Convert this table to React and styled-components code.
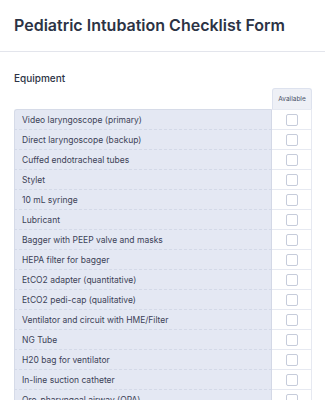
import React from "react";
import styled, { createGlobalStyle } from "styled-components";

const items = [
  "Video laryngoscope (primary)",
  "Direct laryngoscope (backup)",
  "Cuffed endotracheal tubes",
  "Stylet",
  "10 mL syringe",
  "Lubricant",
  "Bagger with PEEP valve and masks",
  "HEPA filter for bagger",
  "EtCO2 adapter (quantitative)",
  "EtCO2 pedi-cap (qualitative)",
  "Ventilator and circuit with HME/Filter",
  "NG Tube",
  "H20 bag for ventilator",
  "In-line suction catheter",
  "Oro-pharyngeal airway (OPA)",
];

export default function App() {
  return (
    <>
      <GlobalStyle />
      <Page>
        <Header>
          <h1>Pediatric Intubation Checklist Form</h1>
        </Header>
        <Section>
          <Label>Equipment</Label>
          <Matrix>
            <thead>
              <tr>
                <Corner />
                <HeadCell>Available</HeadCell>
              </tr>
            </thead>
            <tbody>
              {items.map((each) => (
                <tr key={each}>
                  <RowLabel>{each}</RowLabel>
                  <CheckCell>
                    <Box type="checkbox" aria-label={each} />
                  </CheckCell>
                </tr>
              ))}
            </tbody>
          </Matrix>
        </Section>
      </Page>
    </>
  );
}

const GlobalStyle = createGlobalStyle`
  body {
    margin: 0;
    background: #fff;
    font-family: Inter, "Liberation Sans", sans-serif;
    color: #2c3345;
  }
`;

const Page = styled.div`
  width: 325px;
`;

const Header = styled.div`
  border-bottom: 1px solid #e3e5ec;
  padding: 13px 14px 14px;

  h1 {
    margin: 0;
    font-size: 16px;
    font-weight: 600;
    line-height: 24px;
    white-space: nowrap;
    color: #2c3345;
  }
`;

const Section = styled.div`
  padding: 19px 14px 0;
`;

const Label = styled.div`
  font-size: 10px;
  font-weight: 500;
  line-height: 14px;
  margin-bottom: 3px;
  color: #2c3345;
`;

const Matrix = styled.table`
  width: 297px;
  border-collapse: separate;
  border-spacing: 0;
  table-layout: fixed;
`;

const Corner = styled.th`
  width: 258px;
  padding: 0;
`;

const HeadCell = styled.th`
  width: 38px;
  height: 20px;
  padding: 0;
  background: #eef0f6;
  border: 1px solid #dde2ee;
  border-bottom: none;
  border-radius: 3px 3px 0 0;
  font-size: 6.5px;
  font-weight: 400;
  color: #4a5168;
  text-align: center;
`;

const RowLabel = styled.td`
  height: 19px;
  padding: 0 0 0 7px;
  background: #e4e8f3;
  border-left: 1px solid #d6dbe8;
  border-right: 1px solid #d3d8e6;
  border-top: 1px dashed #d3d9e8;
  font-size: 8.5px;
  color: #3c4257;
  white-space: nowrap;
  overflow: hidden;

  tr:first-child > & {
    border-top: 1px solid #d6dbe8;
    border-top-left-radius: 3px;
  }
`;

const CheckCell = styled.td`
  padding: 0;
  background: #fff;
  border-top: 1px solid #e6e9f1;
  border-right: 1px solid #e6e9f1;
  text-align: center;
  vertical-align: middle;
`;

const Box = styled.input`
  appearance: none;
  display: block;
  margin: 0 auto;
  width: 12px;
  height: 12px;
  border: 1px solid #c6ccdb;
  border-radius: 2px;
  background: #fff;
`;
